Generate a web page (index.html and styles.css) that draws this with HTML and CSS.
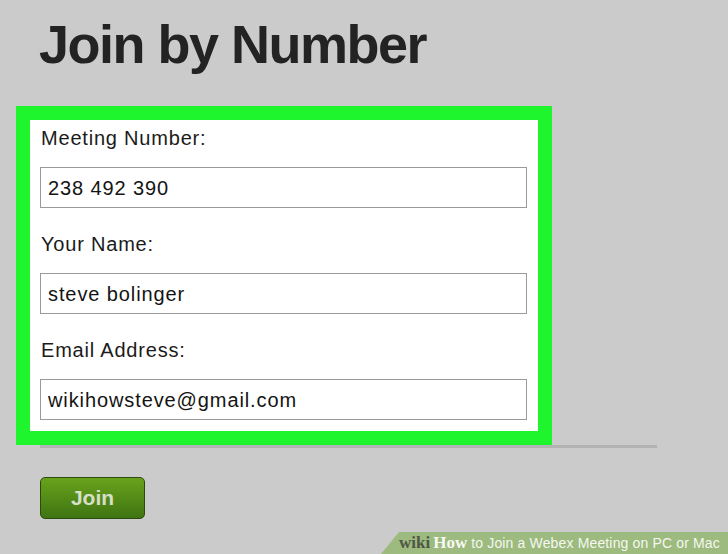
FILE: index.html
```html
<!DOCTYPE html>
<html lang="en">
<head>
    <meta charset="UTF-8">
    <meta name="viewport" content="width=device-width, initial-scale=1.0">
    <title>Join by Number</title>
    <link rel="stylesheet" href="styles.css">
</head>
<body>
  <div class="page">
    <h1 class="title">Join by Number</h1>
    <div class="highlight">
      <form class="join-form">
        <div class="field">
          <label for="meeting" class="label">Meeting Number:</label>
          <input id="meeting" class="input" type="text" value="238 492 390" />
        </div>
        <div class="field">
          <label for="name" class="label">Your Name:</label>
          <input id="name" class="input" type="text" value="steve bolinger" />
        </div>
        <div class="field">
          <label for="email" class="label">Email Address:</label>
          <input id="email" class="input" type="text" value="wikihowsteve@gmail.com" />
        </div>
      </form>
    </div>
    <div class="rule"></div>
    <button type="button" class="join">Join</button>
  </div>

  <div class="banner"><span class="wiki">wiki</span><span class="how">How</span> to Join a Webex Meeting on PC or Mac</div>
</body>
</html>
```

FILE: styles.css
```css
body {
  background-color: #cbcbcb;
  margin: 0;
  height: 554px;
  overflow: hidden;
  position: relative;
}

.page {
  padding: 12px 0 0 16px;
}

.title {
  color: #232323;
  font-family: "Liberation Sans", Arial, sans-serif;
  font-size: 54px;
  font-weight: 700;
  letter-spacing: -1.5px;
  line-height: 64px;
  margin: 0 0 30px;
  padding-left: 23px;
}

/* green frame around the form */
.highlight {
  border: 14px solid #1ef52c;
  box-sizing: border-box;
  width: 536px;
}

.join-form {
  background-color: #fff;
  padding: 6px 11px 11px 10px;
}

.field + .field {
  margin-top: 24px;
}

.label {
  color: #1b1b1b;
  display: block;
  font-family: "Liberation Sans", Arial, sans-serif;
  font-size: 20px;
  letter-spacing: 0.8px;
  line-height: 24px;
  margin-bottom: 17px;
  padding-left: 1px;
}

.input {
  background-color: #fff;
  border: 1px solid #9a9a9a;
  border-radius: 0;
  box-sizing: border-box;
  color: #141414;
  display: block;
  font-family: "Liberation Sans", Arial, sans-serif;
  font-size: 20px;
  height: 41px;
  letter-spacing: 0.9px;
  margin: 0;
  outline: 0;
  padding: 1px 7px 0;
  width: 100%;
}

.rule {
  background-color: #b3b3b3;
  height: 3px;
  margin-left: 24px;
  width: 617px;
}

.join {
  background: linear-gradient(#68a31b, #3f7413);
  border: 1px solid #2c4a0e;
  border-radius: 5px;
  box-sizing: border-box;
  color: #d6dfc9;
  cursor: pointer;
  display: block;
  font-family: "Liberation Sans", Arial, sans-serif;
  font-size: 21px;
  font-weight: 700;
  height: 42px;
  margin: 29px 0 0 24px;
  padding: 0;
  width: 105px;
}

.banner {
  background-color: #9dba7f;
  bottom: 0;
  box-sizing: border-box;
  clip-path: polygon(18px 0, 100% 0, 100% 100%, 0 100%);
  color: #f4f7ef;
  font-family: "Liberation Sans", Arial, sans-serif;
  font-size: 14px;
  height: 22px;
  letter-spacing: 0.15px;
  line-height: 22px;
  padding-left: 18px;
  position: absolute;
  right: 0;
  white-space: nowrap;
  width: 347px;
}

.wiki,
.how {
  font-family: "Liberation Serif", "Times New Roman", serif;
  font-size: 17px;
  font-weight: 700;
  letter-spacing: 0;
}

.wiki {
  color: #4e5746;
  margin-right: 3px;
}

.how {
  color: #f7f9f3;
}
```
